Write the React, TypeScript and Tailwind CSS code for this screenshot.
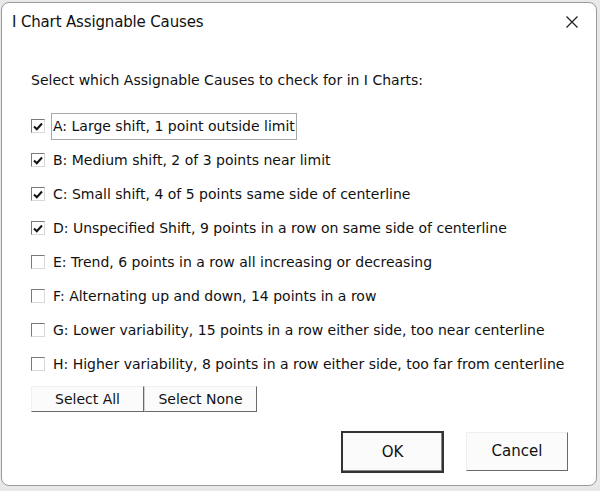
import React, { useState } from "react";

const causes = [
  { key: "A", text: "A: Large shift, 1 point outside limit", on: true },
  { key: "B", text: "B: Medium shift, 2 of 3 points near limit", on: true },
  { key: "C", text: "C: Small shift, 4 of 5 points same side of centerline", on: true },
  { key: "D", text: "D: Unspecified Shift, 9 points in a row on same side of centerline", on: true },
  { key: "E", text: "E: Trend, 6 points in a row all increasing or decreasing", on: false },
  { key: "F", text: "F: Alternating up and down, 14 points in a row", on: false },
  { key: "G", text: "G: Lower variability, 15 points in a row either side, too near centerline", on: false },
  { key: "H", text: "H: Higher variability, 8 points in a row either side, too far from centerline", on: false },
];

function CheckBox({ checked }: { checked: boolean }) {
  return (
    <span className="flex h-[14px] w-[14px] shrink-0 items-center justify-center border border-t-[#7a7a7a] border-l-[#7a7a7a] border-r-[#d8d8d8] border-b-[#d8d8d8] bg-white">
      {checked && (
        <svg width="10" height="9" viewBox="0 0 10 9">
          <path d="M1 4.5 L3.8 7.2 L9 1.5" fill="none" stroke="#111" strokeWidth="2" />
        </svg>
      )}
    </span>
  );
}

export default function App() {
  const [checks, setChecks] = useState(causes.map((c) => c.on));

  return (
    <div className="h-[491px] w-[600px] overflow-hidden bg-[#e8e8e8] pl-[1px] pt-[2px] font-['DejaVu_Sans',sans-serif] text-[#111]">
      <div className="flex h-[484px] w-[596px] flex-col rounded-lg border border-[#9a9a9a] bg-white">
        <div className="flex h-[38px] items-center justify-between pl-[10px] pr-[17px]">
          <span className="text-[15px] tracking-[-0.15px]">I Chart Assignable Causes</span>
          <svg width="14" height="14" viewBox="0 0 14 14">
            <path d="M1.5 1.5 L12.5 12.5 M12.5 1.5 L1.5 12.5" stroke="#222" strokeWidth="1.3" />
          </svg>
        </div>
        <div className="pl-[29px] text-[14px]">
          <div className="mt-[29px] leading-[20px]">Select which Assignable Causes to check for in I Charts:</div>
          <div className="mt-[19px] flex flex-col">
            {causes.map((c, i) => (
              <label
                key={c.key}
                className="flex h-[34px] cursor-default items-center"
                onClick={() => setChecks(checks.map((v, j) => (j === i ? !v : v)))}
              >
                <CheckBox checked={checks[i]} />
                <span
                  className={
                    i === 0
                      ? "ml-[6px] border border-[#a8a8a8] px-[1px] py-[2px]"
                      : "ml-[8px]"
                  }
                >
                  {c.text}
                </span>
              </label>
            ))}
          </div>
          <div className="mt-[5px] flex">
            <button
              className="h-[26px] w-[113px] border border-t-[#f0f0f0] border-l-[#f0f0f0] border-r-[#6a6a6a] border-b-[#6a6a6a] bg-[#fbfbfb]"
              onClick={() => setChecks(checks.map(() => true))}
            >
              Select All
            </button>
            <button
              className="h-[26px] w-[113px] border border-t-[#f0f0f0] border-l-[#d0d0d0] border-r-[#6a6a6a] border-b-[#6a6a6a] bg-[#fbfbfb]"
              onClick={() => setChecks(checks.map(() => false))}
            >
              Select None
            </button>
          </div>
        </div>
        <div className="mt-[19px] flex pl-[339px] text-[15px]">
          <button className="h-[42px] w-[103px] border-2 border-[#333] bg-[#fbfbfb] shadow-[inset_-1px_-1px_0_#888]">
            OK
          </button>
          <button className="ml-[22px] mt-[1px] h-[39px] w-[102px] border border-t-[#eeeeee] border-l-[#eeeeee] border-r-[#6a6a6a] border-b-[#6a6a6a] bg-[#fbfbfb]">
            Cancel
          </button>
        </div>
      </div>
    </div>
  );
}
